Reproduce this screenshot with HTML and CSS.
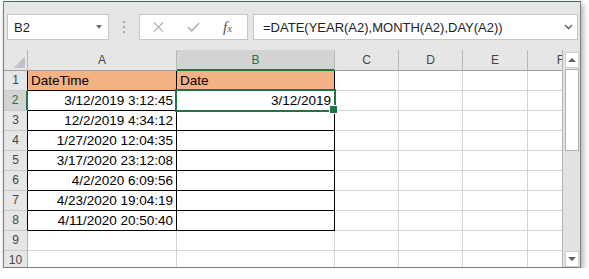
FILE: index.html
```html
<!DOCTYPE html>
<html lang="en">
<head>
    <meta charset="UTF-8">
    <title>Sheet - DATE formula</title>
    <link rel="stylesheet" href="styles.css">
</head>
<body>
    <div class="window">
        <div class="formula-bar">
            <div class="name-box">
                <span>B2</span>
                <i class="caret"></i>
            </div>
            <div class="grip"><i></i><i></i><i></i></div>
            <div class="fx-box">
                <svg class="icon-x" width="11" height="10" viewBox="0 0 11 10"><path d="M1 0.5 L10 9.5 M10 0.5 L1 9.5" stroke="#b3b3b3" stroke-width="1.2" fill="none"/></svg>
                <svg class="icon-check" width="13" height="10" viewBox="0 0 13 10"><path d="M1 5.2 L4.8 8.8 L12 1.2" stroke="#b3b3b3" stroke-width="1.7" fill="none"/></svg>
                <span class="fx"><i>f</i><i class="x">x</i></span>
            </div>
            <div class="formula">
                <span>=DATE(YEAR(A2),MONTH(A2),DAY(A2))</span>
                <svg width="9" height="6" viewBox="0 0 9 6"><path d="M1 1 L4.5 4.6 L8 1" stroke="#6e6e6e" stroke-width="1.6" fill="none"/></svg>
            </div>
        </div>

        <div class="sheet-wrap">
            <div class="sheet">
                <div class="hd corner"><span></span></div>
                <div class="hd">A</div>
                <div class="hd sel-col">B</div>
                <div class="hd">C</div>
                <div class="hd">D</div>
                <div class="hd">E</div>
                <div class="hd">F</div>

                <div class="rh fr">1</div>
                <div class="c fr title">DateTime</div>
                <div class="c fr title">Date</div>
                <div class="c"></div><div class="c"></div><div class="c"></div><div class="c"></div>

                <div class="rh sel-row">2</div>
                <div class="c fr num">3/12/2019 3:12:45</div>
                <div class="c fr num active">3/12/2019</div>
                <div class="c"></div><div class="c"></div><div class="c"></div><div class="c"></div>

                <div class="rh fr">3</div>
                <div class="c fr num">12/2/2019 4:34:12</div>
                <div class="c fr"></div>
                <div class="c"></div><div class="c"></div><div class="c"></div><div class="c"></div>

                <div class="rh fr">4</div>
                <div class="c fr num">1/27/2020 12:04:35</div>
                <div class="c fr"></div>
                <div class="c"></div><div class="c"></div><div class="c"></div><div class="c"></div>

                <div class="rh fr">5</div>
                <div class="c fr num">3/17/2020 23:12:08</div>
                <div class="c fr"></div>
                <div class="c"></div><div class="c"></div><div class="c"></div><div class="c"></div>

                <div class="rh fr">6</div>
                <div class="c fr num">4/2/2020 6:09:56</div>
                <div class="c fr"></div>
                <div class="c"></div><div class="c"></div><div class="c"></div><div class="c"></div>

                <div class="rh fr">7</div>
                <div class="c fr num">4/23/2020 19:04:19</div>
                <div class="c fr"></div>
                <div class="c"></div><div class="c"></div><div class="c"></div><div class="c"></div>

                <div class="rh fr">8</div>
                <div class="c fr num">4/11/2020 20:50:40</div>
                <div class="c fr"></div>
                <div class="c"></div><div class="c"></div><div class="c"></div><div class="c"></div>

                <div class="rh">9</div>
                <div class="c"></div><div class="c"></div>
                <div class="c"></div><div class="c"></div><div class="c"></div><div class="c"></div>

                <div class="rh">10</div>
                <div class="c"></div><div class="c"></div>
                <div class="c"></div><div class="c"></div><div class="c"></div><div class="c"></div>
            </div>

            <div class="scrollbar">
                <div class="sb-btn"><i class="up"></i></div>
                <div class="sb-thumb"></div>
                <div class="sb-track"></div>
                <div class="sb-btn"><i class="down"></i></div>
            </div>
        </div>
    </div>
</body>
</html>
```

FILE: styles.css
```css
* {
    box-sizing: border-box;
}

html,
body {
    margin: 0;
    padding: 0;
    background: #fff;
}

body {
    font-family: "Liberation Sans", Arial, sans-serif;
    color: #000;
}

.window {
    margin: 1px 0 0 3px;
    width: 578px;
    height: 267px;
    border: 1px solid #7d7d7d;
    border-top-color: #4f6a58;
    box-shadow: 2px 3px 6px rgba(0, 0, 0, 0.35);
    display: flex;
    flex-direction: column;
    overflow: hidden;
}

/* formula bar */

.formula-bar {
    height: 48px;
    flex: none;
    display: flex;
    align-items: flex-start;
    padding: 12px 2px 0 3px;
    background-color: #e6e6e6;
}

.name-box,
.fx-box,
.formula {
    height: 26px;
    background-color: #fff;
    border: 1px solid #c6c6c6;
    display: flex;
    align-items: center;
}

.name-box {
    width: 102px;
    justify-content: space-between;
    padding: 0 6px 0 6px;
    font-size: 13px;
    color: #222;
}

.caret {
    width: 0;
    height: 0;
    border-left: 3.5px solid transparent;
    border-right: 3.5px solid transparent;
    border-top: 4px solid #6e6e6e;
}

.grip {
    width: 30px;
    height: 26px;
    display: flex;
    flex-direction: column;
    align-items: center;
    justify-content: center;
    gap: 3px;
}

.grip i {
    width: 2px;
    height: 2px;
    background-color: #a8a8a8;
}

.fx-box {
    width: 109px;
    padding-left: 13px;
    margin-right: 5px;
}

.icon-check {
    margin-left: 23px;
}

.fx {
    margin-left: 23px;
    font-family: "Liberation Serif", serif;
    font-size: 15px;
    color: #555;
}

.fx .x {
    font-size: 11px;
}

.formula {
    flex: 1;
    justify-content: space-between;
    padding: 0 4px 0 9px;
    font-size: 13px;
    color: #222;
}

/* grid */

.sheet-wrap {
    flex: 1;
    display: flex;
    overflow: hidden;
}

.sheet {
    flex: 1;
    overflow: hidden;
    display: grid;
    grid-template-columns: 24px 149px 158px 64px 64px 65px 66px;
    grid-template-rows: 21px repeat(10, 20px);
}

.hd,
.rh,
.c {
    border-right: 1px solid #d4d4d4;
    border-bottom: 1px solid #d4d4d4;
    white-space: nowrap;
    overflow: hidden;
}

.hd {
    background-color: #e6e6e6;
    border-right-color: #b8b8b8;
    border-bottom-color: #9e9e9e;
    font-size: 12px;
    line-height: 20px;
    text-align: center;
    color: #444;
}

.corner {
    display: flex;
    justify-content: flex-end;
    align-items: flex-end;
    padding: 0 2px 2px 0;
}

.corner span {
    width: 12px;
    height: 11px;
    background: linear-gradient(to bottom right, transparent 50%, #c2c2c2 50%);
}

.rh {
    background-color: #e6e6e6;
    border-right-color: #b0b0b0;
    border-bottom-color: #cacaca;
    font-size: 12px;
    line-height: 19px;
    text-align: center;
    color: #444;
}

.rh.fr {
    border-right-color: #000;
}

.sel-col {
    background-color: #d3d3d3;
    border-bottom: 2px solid #217346;
    color: #217346;
}

.rh.sel-row {
    background-color: #d3d3d3;
    border-right: 2px solid #217346;
    color: #217346;
}

.c {
    font-size: 13.5px;
    line-height: 19px;
    padding: 0 3px;
}

.c.fr {
    border-right-color: #000;
    border-bottom-color: #000;
}

.c.title {
    background-color: #f4b183;
}

.c.num {
    text-align: right;
}

.c.active {
    position: relative;
    overflow: visible;
}

.c.active::before {
    content: "";
    position: absolute;
    left: -2px;
    top: -2px;
    right: -2px;
    bottom: -2px;
    border: 2px solid #217346;
}

.c.active::after {
    content: "";
    position: absolute;
    right: -4px;
    bottom: -4px;
    width: 7px;
    height: 7px;
    background-color: #217346;
    border: 1px solid #fff;
}

/* scrollbar */

.scrollbar {
    width: 18px;
    flex: none;
    display: flex;
    flex-direction: column;
    padding: 2px 1px 0 2px;
    background-color: #e2e2e2;
    border-left: 1px solid #b4b4b4;
}

.sb-btn {
    height: 16px;
    flex: none;
    background-color: #fff;
    border: 1px solid #cfcfcf;
    display: flex;
    align-items: center;
    justify-content: center;
}

.sb-btn .up,
.sb-btn .down {
    width: 0;
    height: 0;
    border-left: 4px solid transparent;
    border-right: 4px solid transparent;
}

.sb-btn .up {
    border-bottom: 4px solid #606060;
}

.sb-btn .down {
    border-top: 4px solid #606060;
}

.sb-thumb {
    height: 82px;
    flex: none;
    margin-top: 1px;
    background-color: #fff;
    border: 1px solid #b0b0b0;
}

.sb-track {
    flex: 1;
}
```
